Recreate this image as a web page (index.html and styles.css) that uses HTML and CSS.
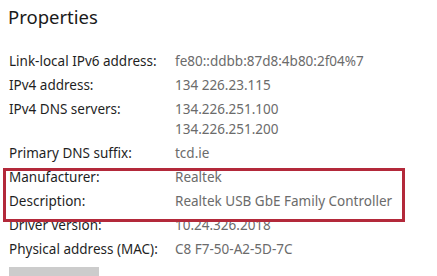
FILE: index.html
```html
<!DOCTYPE html>
<html>
<head>
<meta charset="utf-8">
<link rel="stylesheet" href="styles.css">
</head>
<body>
<div class="page">
  <h1 class="title">Properties</h1>
  <div class="props">
    <div class="row"><div class="label">Link-local IPv6 address:</div><div class="value">fe80::ddbb:87d8:4b80:2f04%7</div></div>
    <div class="row"><div class="label">IPv4 address:</div><div class="value">134 226.23.115</div></div>
    <div class="row"><div class="label">IPv4 DNS servers:</div><div class="value">134.226.251.100<br>134.226.251.200</div></div>
    <div class="row"><div class="label">Primary DNS suffix:</div><div class="value">tcd.ie</div></div>
    <div class="row"><div class="label">Manufacturer:</div><div class="value">Realtek</div></div>
    <div class="row"><div class="label">Description:</div><div class="value">Realtek USB GbE Family Controller</div></div>
    <div class="row"><div class="label">Driver version:</div><div class="value">10.24.326.2018</div></div>
    <div class="row"><div class="label">Physical address (MAC):</div><div class="value">C8 F7-50-A2-5D-7C</div></div>
  </div>
  <div class="button"></div>
  <div class="highlight"></div>
</div>
</body>
</html>
```
FILE: styles.css
```css
html, body {
  margin: 0;
  padding: 0;
  background: #ffffff;
}
.page {
  position: relative;
  width: 437px;
  height: 276px;
  overflow: hidden;
  font-family: "Noto Sans", "Open Sans", sans-serif;
}
.title {
  margin: 0;
  padding: 3px 0 0 8px;
  font-size: 18.5px;
  font-weight: 400;
  line-height: 28px;
  color: #1a1a1a;
  height: 46px;
}
.props {
  display: flex;
  flex-direction: column;
  padding-left: 9px;
}
.row {
  display: grid;
  grid-template-columns: 166px auto;
  padding: 2px 0;
  font-size: 13.5px;
  line-height: 20px;
}
.label {
  color: #1f1f1f;
}
.value {
  color: #6b6b6b;
}
.button {
  margin: 6px 0 0 9px;
  width: 90px;
  height: 12px;
  background: #cccccc;
}
.highlight {
  position: absolute;
  left: 3px;
  top: 168px;
  width: 396px;
  height: 48px;
  border: 3px solid #b3293a;
}
```
